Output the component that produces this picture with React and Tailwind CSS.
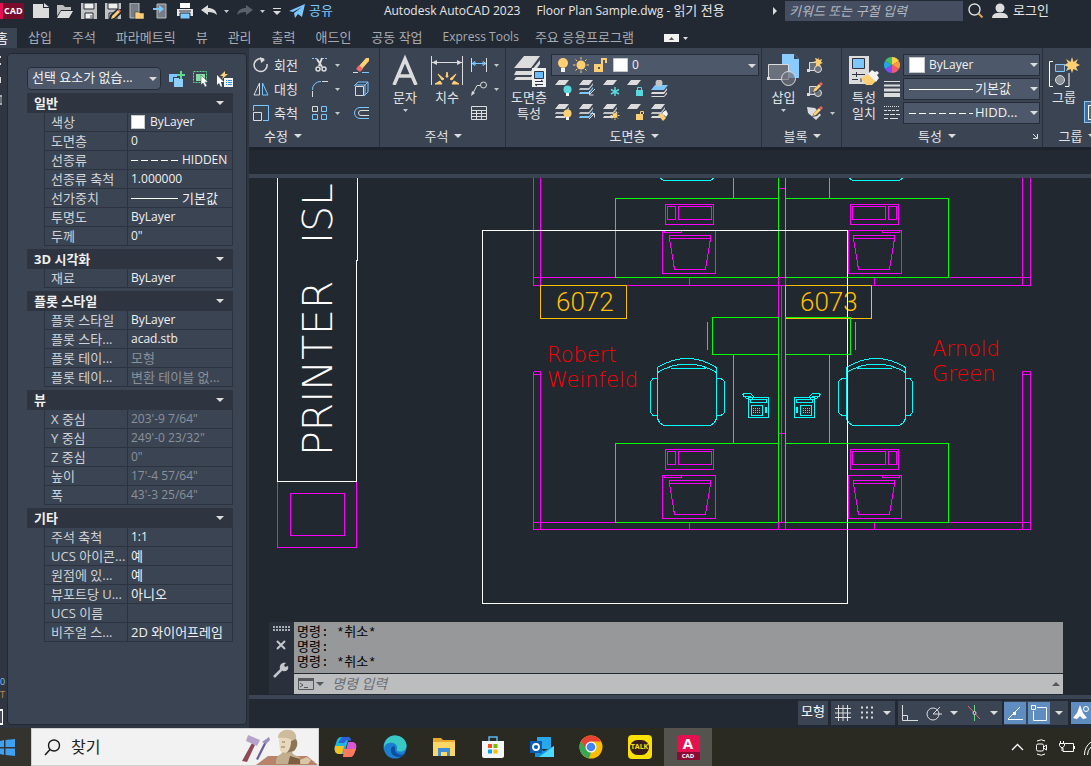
import React from 'react';
import clsx from 'clsx';

const RIBBON_TABS = [
  '삽입', '주석', '파라메트릭', '뷰', '관리', '출력', '애드인', '공동 작업', 'Express Tools', '주요 응용프로그램',
];

const SECTIONS = [
  {
    title: '일반',
    rows: [
      { label: '색상', value: 'ByLayer', mark: 'swatch' },
      { label: '도면층', value: '0' },
      { label: '선종류', value: 'HIDDEN', mark: 'dashed' },
      { label: '선종류 축척', value: '1.000000' },
      { label: '선가중치', value: '기본값', mark: 'solid' },
      { label: '투명도', value: 'ByLayer' },
      { label: '두께', value: '0"' },
    ],
  },
  { title: '3D 시각화', rows: [{ label: '재료', value: 'ByLayer' }] },
  {
    title: '플롯 스타일',
    rows: [
      { label: '플롯 스타일', value: 'ByLayer' },
      { label: '플롯 스타...', value: 'acad.stb' },
      { label: '플롯 테이...', value: '모형', muted: true },
      { label: '플롯 테이...', value: '변환 테이블 없...', muted: true },
    ],
  },
  {
    title: '뷰',
    rows: [
      { label: 'X 중심', value: '203\'-9 7/64"', muted: true },
      { label: 'Y 중심', value: '249\'-0 23/32"', muted: true },
      { label: 'Z 중심', value: '0"', muted: true },
      { label: '높이', value: '17\'-4 57/64"', muted: true },
      { label: '폭', value: '43\'-3 25/64"', muted: true },
    ],
  },
  {
    title: '기타',
    rows: [
      { label: '주석 축척', value: '1:1' },
      { label: 'UCS 아이콘...', value: '예' },
      { label: '원점에 있...', value: '예' },
      { label: '뷰포트당 U...', value: '아니오' },
      { label: 'UCS 이름', value: '' },
      { label: '비주얼 스...', value: '2D 와이어프레임' },
    ],
  },
];

/* ---------- small building blocks ---------- */

function Icon({ size = 16, className, children }) {
  return (
    <svg
      width={size}
      height={size}
      viewBox={`0 0 ${size} ${size}`}
      fill="none"
      stroke="#dcdcdc"
      className={clsx('shrink-0', className)}
      aria-hidden="true"
    >
      {children}
    </svg>
  );
}

function Caret({ small = false, className }) {
  return small ? (
    <svg width="5" height="3" viewBox="0 0 5 3" className={clsx('shrink-0', className)} aria-hidden="true">
      <path d="M0 0h5L2.5 3z" fill="#c4c7cb" />
    </svg>
  ) : (
    <svg width="8" height="4" viewBox="0 0 8 4" className={clsx('shrink-0', className)} aria-hidden="true">
      <path d="M0 0h8L4 4z" fill="#dcdcdc" />
    </svg>
  );
}

function ToolButton({ label, children, className }) {
  return (
    <button type="button" aria-label={label} className={clsx('flex items-center justify-center', className)}>
      {children}
    </button>
  );
}

/* ---------- quick access icons ---------- */

const NewIcon = () => (
  <Icon><path d="M0 1h10v4h6v10H0z" fill="#dcdcdc" stroke="none" /><path d="M11 0l5 4h-5z" fill="#dcdcdc" stroke="none" /></Icon>
);
const OpenIcon = () => (
  <Icon><path d="M0 2h6l2 2h6v3H4L0 13z" fill="#bdbdbd" stroke="none" /><path d="M4 8h12l-4 7H0z" fill="#dcdcdc" stroke="none" /></Icon>
);
const SaveIcon = ({ pencil: withPencil }) => (
  <Icon>
    <path d="M0 0h16v16H0z" fill="#c2c2c2" stroke="none" />
    <path d="M3 0h10v6H3zM4 10h8v6H4z" fill="#eeeeee" stroke="#222933" />
    <path d="M10 12v3" stroke="#555" />
    {withPencil && (
      <g stroke="none">
        <path d="M4 16l1-4 7-6h4v5l-6 5z" fill="#222933" />
        <path d="M7 13l6-6 2 2-6 6-3 1z" fill="#ffcf73" />
        <path d="M13 7l1-1 2 2-1 1z" fill="#ff6b6b" />
      </g>
    )}
  </Icon>
);
const MobileOpenIcon = () => (
  <Icon><path d="M1 0h9v15H1z" fill="#777d86" stroke="#bdbdbd" /><path d="M6 9h4l1 1h4v6H6z" fill="#ffcf73" stroke="#222933" strokeWidth="0.5" /></Icon>
);
const MobileSaveIcon = () => (
  <Icon><path d="M4 1h9v14H4z" fill="#777d86" stroke="#bdbdbd" /><path d="M0 5h6V2l5 4-5 4V7H0z" fill="#7cc7ff" stroke="none" /></Icon>
);
const PrintIcon = () => (
  <Icon>
    <path d="M3 0h10v5H3z" fill="#ffffff" stroke="none" />
    <path d="M0 6h16v7H0z" fill="#e8e8e8" stroke="none" />
    <path d="M2 8h12" stroke="#222933" />
    <path d="M3 10h10v6H3z" fill="#7cc7ff" stroke="#222933" />
  </Icon>
);
const UndoIcon = ({ flip }) => (
  <Icon className={clsx(flip && '-scale-x-100')}>
    <path d="M0 7l7-5v3c5 0 8 2 9 7-2-2-5-3-9-3v3z" fill={flip ? '#5a616b' : '#dcdcdc'} stroke="none" />
  </Icon>
);
const ShareIcon = () => (
  <Icon><path d="M0 8L16 1l-3 13-4-3-3 4-1-5 8-6-9 5z" fill="#7cc7ff" stroke="none" /></Icon>
);

function TitleBar() {
  return (
    <header className="flex h-7 shrink-0 items-start overflow-hidden whitespace-nowrap text-[13px] text-[#e6e6e6]">
      <div className="flex h-[22px] items-center">
        <button type="button" className="flex h-4 w-6 items-center bg-[#7a0c2e] text-[9px] font-bold text-white">
          <span className="mr-px h-4 w-[3px] bg-[#e51050]" />
          CAD
        </button>
        <div className="ml-[9px] flex items-center gap-2">
          <ToolButton label="새로 만들기"><NewIcon /></ToolButton>
          <ToolButton label="열기"><OpenIcon /></ToolButton>
          <ToolButton label="저장"><SaveIcon /></ToolButton>
          <ToolButton label="다른 이름으로 저장"><SaveIcon pencil /></ToolButton>
          <ToolButton label="웹 및 모바일에서 열기"><MobileOpenIcon /></ToolButton>
          <ToolButton label="웹 및 모바일에 저장"><MobileSaveIcon /></ToolButton>
          <ToolButton label="플롯"><PrintIcon /></ToolButton>
          <ToolButton label="명령 취소"><UndoIcon /></ToolButton>
        </div>
        <Caret small className="ml-[7px]" />
        <ToolButton label="명령 복구" className="ml-2"><UndoIcon flip /></ToolButton>
        <Caret small className="ml-[7px]" />
        <ToolButton label="사용자화" className="ml-2">
          <svg width="8" height="7" viewBox="0 0 8 7" aria-hidden="true"><path d="M0 0h8v1H0zM0 3h8L4 7z" fill="#dcdcdc" /></svg>
        </ToolButton>
        <button type="button" className="ml-2 flex items-center gap-1 text-[#7cc7ff]">
          <ShareIcon />
          공유
        </button>
      </div>
      <h1 className="ml-[51px] flex h-[22px] items-center gap-4 text-xs">
        <span>Autodesk AutoCAD 2023</span>
        <span>Floor Plan Sample.dwg - <span className="text-[13px]">읽기 전용</span></span>
      </h1>
      <div className="ml-auto flex h-[22px] items-center pr-[42px]">
        <svg width="4" height="8" viewBox="0 0 4 8" className="mr-2" aria-hidden="true"><path d="M0 0l4 4-4 4z" fill="#dcdcdc" /></svg>
        <input
          type="search"
          aria-label="검색"
          placeholder="키워드 또는 구절 입력"
          className="mb-px h-5 w-[178px] bg-[#454d60] px-1 text-[13px] italic text-white outline-none placeholder:text-[#b4b8c0]"
        />
        <ToolButton label="찾기" className="ml-[5px]">
          <Icon><circle cx="6.5" cy="6.5" r="5.5" strokeWidth="1.4" /><path d="M10.5 10.5l4 4" stroke="#e0a458" strokeWidth="2" /></Icon>
        </ToolButton>
        <button type="button" className="ml-2 flex items-center gap-[5px]">
          <Icon><circle cx="8" cy="5" r="4.5" fill="#dcdcdc" stroke="none" /><path d="M0 15c0-4 4-5 5-5h6c1 0 5 1 5 5z" fill="#dcdcdc" stroke="none" /></Icon>
          로그인
        </button>
      </div>
    </header>
  );
}

function TabBar() {
  return (
    <nav className="flex h-5 shrink-0 items-stretch overflow-hidden whitespace-nowrap text-[13px] text-[#a8acb2]">
      <button type="button" className="flex w-[17px] shrink-0 items-center justify-end bg-[#3b4453] pr-[9px] leading-[18px] text-white">홈</button>
      <div className="ml-[11px] flex items-start gap-5">
        {RIBBON_TABS.map((tab) => (
          <button
            key={tab}
            type="button"
            className={clsx('leading-[18px]', tab === 'Express Tools' && '-mr-1 text-xs leading-[18px]')}
          >
            {tab}
          </button>
        ))}
      </div>
      <ToolButton label="리본 최소화" className="ml-[30px]">
        <svg width="24" height="8" viewBox="0 0 24 8" aria-hidden="true">
          <path d="M0 0h15v8H0z" fill="#f2f2f2" />
          <path d="M5 6h5L7.500 3z" fill="#555" />
          <path d="M19 3h5l-2.500 3z" fill="#dcdcdc" />
        </svg>
      </ToolButton>
    </nav>
  );
}

/* ---------- properties palette ---------- */

function ValueMark({ mark }) {
  if (mark === 'swatch') return <span className="mr-[5px] size-[14px] border border-[#c8c8c8] bg-white" />;
  if (mark === 'dashed') {
    return (
      <svg width="47" height="1" className="mr-1 shrink-0" aria-hidden="true">
        <path d="M0 .5h47" stroke="#fff" strokeDasharray="7 3" />
      </svg>
    );
  }
  if (mark === 'solid') return <span className="mr-1 h-px w-[47px] bg-white" />;
  return null;
}

function PropertySection({ title, rows }) {
  return (
    <section className="mb-[3px]">
      <button type="button" className="flex h-5 w-full items-center justify-between bg-[#2e3440] pl-[7px] pr-[9px] text-[13px] font-bold leading-[18px] text-[#f0f0f0]">
        {title}
        <Caret />
      </button>
      <div className="pl-[17px]">
        <table className="w-full table-fixed border-separate border-spacing-0 text-[13px]">
          <tbody>
            {rows.map(({ label, value, mark, muted }, i) => (
              <tr key={i} className="h-[19px]">
                <th scope="row" className="h-[19px] w-[84px] overflow-hidden whitespace-nowrap border-x border-b border-[#2c323e] p-0 pl-[6px] text-left font-normal leading-[18px] text-[#d0d3d7]">
                  {label}
                </th>
                <td className={clsx('h-[19px] overflow-hidden border-b border-r border-[#2c323e] p-0 pl-[3px]', muted ? 'text-[#8b919a]' : 'text-[#f0f0f0]')}>
                  <div className={clsx('flex items-center whitespace-nowrap leading-[18px]', !/[가-힣]/.test(value) && 'text-xs leading-[18px]')}>
                    <ValueMark mark={mark} />
                    {value}
                  </div>
                </td>
              </tr>
            ))}
          </tbody>
        </table>
      </div>
    </section>
  );
}

function PropertiesPalette() {
  return (
    <aside className="flex w-[249px] shrink-0 bg-[#2f3541]">
      <div className="flex w-[7px] shrink-0 flex-col overflow-hidden text-[9px] leading-[13px] text-[#a8acb2]">
        <span className="mt-2 h-[9px] w-px border-y-2 border-[#dcdcdc]" />
        <span className="mt-3 h-[6px] w-px bg-[#dcdcdc]" />
        <span className="mt-3 h-[10px] w-[2px] border-y-2 border-[#a8acb2] bg-[#6d737c]" />
        <span className="mt-auto text-[#7cc7ff]">0</span>
        <span className="text-[#c98a4b]">T</span>
        <span className="mb-[3px] mt-2 h-4 w-[3px] border-y-2 border-r border-white bg-[#454d60]" />
      </div>
      <div className="mb-[3px] mr-[2px] mt-[5px] flex-1 rounded border border-[#232933] bg-[#3b4453] pl-[19px] pr-[13px] pt-[13px]">
        <div className="flex items-center">
          <div className="relative flex w-[134px]">
            <select aria-label="선택 요소" className="h-[23px] w-full appearance-none rounded-sm border border-[#272d38] bg-[#4d586b] pb-[2px] pl-1 text-[13px] text-[#f0f0f0]">
              <option>선택 요소가 없습...</option>
            </select>
            <Caret className="pointer-events-none absolute right-1 top-[10px]" />
          </div>
          <div className="ml-2 flex gap-2">
            <ToolButton label="PICKADD 전환">
              <Icon>
                <path d="M0 3h8v8H0z" fill="#7cc7ff" stroke="none" />
                <path d="M4 6h11v10H4z" fill="#3b4453" stroke="none" />
                <path d="M5 7h9v9H5z" fill="#8fd0ff" stroke="none" />
                <path d="M12 0v8M8 4h8" stroke="#3b4453" strokeWidth="4" />
                <path d="M12 0v8M8 4h8" stroke="#5fd98a" strokeWidth="2" />
              </Icon>
            </ToolButton>
            <ToolButton label="객체 선택">
              <Icon>
                <path d="M.5.5h13v11H.5z" stroke="#5fd98a" strokeDasharray="2 1" />
                <path d="M3 3h9v7H3z" fill="#86dba2" stroke="none" />
                <path d="M8 4v10l2-2 2 4 2-1-2-4h3z" fill="#ffffff" stroke="#3b4453" strokeWidth=".5" />
              </Icon>
            </ToolButton>
            <ToolButton label="신속 선택">
              <Icon>
                <path d="M8 0L3 5h3L5 8l6-5H8z" fill="#ffcf73" stroke="none" />
                <path d="M0 4v10l2-2 2 4 1-1-1-4h3z" fill="#ffffff" stroke="none" />
                <path d="M7 7h9v9H7z" fill="#f4f4f4" stroke="none" />
                <path d="M9 9.500h1M9 11.500h1M9 13.500h1M11 9.500h4M11 11.500h4M11 13.500h4" stroke="#2f8fe0" />
              </Icon>
            </ToolButton>
          </div>
        </div>
        <div className="pt-[3px]">
          {SECTIONS.map((section) => (
            <PropertySection key={section.title} {...section} />
          ))}
        </div>
      </div>
    </aside>
  );
}

/* ---------- ribbon ---------- */

function RibbonPanel({ title, launcher, className, children }) {
  return (
    <section className={clsx('flex shrink-0 flex-col border-r border-[#2a303b]', className)}>
      <div className="flex h-[77px] pt-[5px]">{children}</div>
      <button type="button" className="relative flex h-[22px] items-center justify-center gap-[6px] pl-[2px] text-[13px] leading-[18px] text-[#e2e4e7]">
        {title}
        <Caret />
        {launcher && (
          <svg width="6" height="6" viewBox="0 0 6 6" className="absolute right-1 top-2" aria-hidden="true">
            <path d="M1 1l4 4M5.500 1v4.500H1" stroke="#dcdcdc" fill="none" />
          </svg>
        )}
      </button>
    </section>
  );
}

function BigButton({ icon, lines, caret, className }) {
  return (
    <button type="button" className={clsx('flex flex-col items-center text-[13px] leading-4 text-[#e2e4e7]', className)}>
      <span className="mb-[3px] block h-[33px]">{icon}</span>
      {lines.map((line) => (
        <span key={line} className="whitespace-nowrap">{line}</span>
      ))}
      {caret && <Caret small className="mt-1" />}
    </button>
  );
}

const ModifyIcons = {
  rotate: <Icon><path d="M11 2.500A6.500 6.500 0 1 0 14 7" strokeWidth="1.500" /><path d="M7 0l5 3-4 3z" fill="#dcdcdc" stroke="none" /></Icon>,
  mirror: <Icon><path d="M6.500 2v12H1z" /><path d="M9.500 2v12H15z" stroke="#7cc7ff" /></Icon>,
  scale: <Icon><path d="M.5 6V.5h15v15H10" stroke="#7cc7ff" /><path d="M.5 7.500h8v8h-8z" /></Icon>,
  trim: <Icon><path d="M0 1.500h6M10 1.500h6" stroke="#7cc7ff" strokeDasharray="2 1" /><path d="M5 2l5 8M10 1L7 9" strokeWidth="2" /><circle cx="6" cy="12" r="2" strokeWidth="1.500" /><circle cx="12" cy="12" r="2" strokeWidth="1.500" /></Icon>,
  fillet: <Icon><path d="M.5 16v-6" /><path d="M.5 9A8 8 0 0 1 9 .5" stroke="#7cc7ff" /><path d="M10 .5h6" /></Icon>,
  array: <Icon><path d="M.5 1.500h5v5h-5z" /><path d="M9.500 1.500h5v5h-5zM.5 9.500h5v5h-5zM9.500 9.500h5v5h-5z" stroke="#7cc7ff" /></Icon>,
  erase: <Icon><path d="M6 9L13 1h3v3L9 12z" fill="#ffcf73" stroke="none" /><path d="M6 8l4 4-3 3-4-3z" fill="#f06a6a" stroke="none" /><path d="M0 15.500h5" /><path d="M9 15.500h7" stroke="#7cc7ff" /></Icon>,
  explode: <Icon><path d="M2.500 5.500h8v9h-8z" /><path d="M1 5l4-4h10v10l-4 4M11 5l4-4M12 14V4H2" stroke="#7cc7ff" /></Icon>,
  offset: <Icon><path d="M16 2.500H7a5 5 0 0 0 0 11h9" stroke="#7cc7ff" /><path d="M16 5.500H8a2.500 2.500 0 0 0 0 5h8" /></Icon>,
};

function ModifyPanel() {
  const rows = [
    { icon: 'rotate', label: '회전', second: 'trim', third: 'erase' },
    { icon: 'mirror', label: '대칭', second: 'fillet', third: 'explode' },
    { icon: 'scale', label: '축척', second: 'array', third: 'offset' },
  ];
  return (
    <RibbonPanel title="수정" className="w-[131px] [&>button]:pr-16">
      <div className="flex flex-col pl-1">
        {rows.map((row) => (
          <div key={row.icon} className="flex h-6 items-center">
            <button type="button" className="flex w-[59px] items-center gap-[5px] whitespace-nowrap text-[13px] leading-[18px] text-[#e2e4e7]">
              {ModifyIcons[row.icon]}
              {row.label}
            </button>
            <ToolButton label={row.second} className="gap-[7px]">
              {ModifyIcons[row.second]}
              <Caret small />
            </ToolButton>
            <ToolButton label={row.third} className="ml-[13px]">{ModifyIcons[row.third]}</ToolButton>
          </div>
        ))}
      </div>
    </RibbonPanel>
  );
}

function AnnotatePanel() {
  return (
    <RibbonPanel title="주석" className="w-[126px]">
      <BigButton
        lines={['문자']}
        caret
        className="ml-3"
        icon={(
          <svg width="26" height="32" viewBox="0 0 26 32" aria-hidden="true">
            <path d="M2 32L13 6l11 26M6 23h14" stroke="#dcdcdc" strokeWidth="3.500" fill="none" />
          </svg>
        )}
      />
      <BigButton
        lines={['치수']}
        className="ml-[13px]"
        icon={(
          <Icon size={32}>
            <path d="M.5 3v31M31.500 3v31M1 9.500h30" />
            <path d="M1 9.500l5-2.500v5zM31 9.500l-5-2.500v5z" fill="#dcdcdc" stroke="none" />
            <path d="M15 24l1-5 1 5zM11 27l-4-6 6 5zM21 27l4-6-6 5zM4 31l5-3 2 3zM28 31l-5-3-2 3z" fill="#ffcf73" stroke="#ffcf73" />
          </Icon>
        )}
      />
      <div className="ml-2 flex flex-col">
        <ToolButton label="선형" className="h-6 gap-[7px]">
          <Icon><path d="M.5 1v14M15.500 1v14" /><path d="M1 6.500h14M1 6.500l3-2v4zM15 6.500l-3-2v4z" stroke="#7cc7ff" /></Icon>
          <Caret small />
        </ToolButton>
        <ToolButton label="지시선" className="h-6 gap-[7px]">
          <Icon><circle cx="12.500" cy="4" r="3" /><path d="M9 4.500H6L2 12" /><path d="M0 15l1-5 3 2z" fill="#dcdcdc" stroke="none" /></Icon>
          <Caret small />
        </ToolButton>
        <ToolButton label="테이블" className="h-6 w-4">
          <Icon><path d="M.5 1.500h15v13H.5zM.5 5.500h15M.5 8.500h15M.5 11.500h15M5.500 5.500v9M10.500 5.500v9" /></Icon>
        </ToolButton>
      </div>
    </RibbonPanel>
  );
}

/** Stack of sheets used by the layer tools; `marker` is drawn over the lower right corner. */
function LayerIcon({ sheets = 3, accent = false, marker }) {
  return (
    <Icon size={17}>
      <g stroke="none">
        <path d="M4 0h10l-4 5H0z" fill="#dcdcdc" />
        {sheets > 1 && (
          <>
            <path d="M1 8h9l4-5v2L10 10H0z" fill="#bfc3c8" />
            <path d="M1 12h9l4-5v2L10 14H0z" fill={accent ? '#7cc7ff' : '#dcdcdc'} />
          </>
        )}
      </g>
      {marker}
    </Icon>
  );
}

const bulb = (color) => (
  <g stroke="none"><circle cx="12.500" cy="9.500" r="4" fill={color} /><path d="M11 13h3v3h-3z" fill="#f4f4f4" /></g>
);
const padlock = (color, open) => (
  <g><path d="M9 10h7v6H9z" fill={color} stroke="none" /><path d={open ? 'M13.500 10V7.500h3V10' : 'M10.500 10V7.500h4V10'} stroke={color} /></g>
);

const LAYER_TOOLS = [
  ['끄기', <LayerIcon sheets={1} marker={bulb('#5ad8e0')} />],
  ['분리', <LayerIcon accent marker={<path d="M16 9l-5 5M10.500 11v4h4" />} />],
  ['동결', <LayerIcon sheets={1} marker={<path d="M12 7v9M8 9.500l8 4.500M16 9.500L8 14" stroke="#5ad8e0" strokeWidth="1.500" />} />],
  ['잠금', <LayerIcon sheets={1} marker={padlock('#5ad8e0')} />],
  ['현재로 설정', (
    <Icon size={17}>
      <path d="M4 5h13l-4 5H0z" fill="#7cc7ff" stroke="none" />
      <path d="M1 12h12l3-4v2l-3 4H0zM1 16h12l3-4v2l-3 3H0z" fill="#dcdcdc" stroke="none" />
      <circle cx="8" cy="3" r="3.500" fill="#c4c4c4" stroke="none" />
    </Icon>
  )],
  ['모두 켜기', <LayerIcon marker={bulb('#ffcf73')} />],
  ['분리 해제', <LayerIcon accent marker={<path d="M10 15l5-5M11.500 9.500h4v4" />} />],
  ['모두 동결 해제', <LayerIcon marker={<g stroke="#ffcf73"><circle cx="12" cy="11.500" r="2.500" fill="#ffcf73" stroke="none" /><path d="M12 7v1.500M12 14.500V16M7.500 11.500H9M15 11.500h1.500M9 8.500l1 1M15 8.500l-1 1M9 14.500l1-1M15 14.500l-1-1" /></g>} />],
  ['잠금 해제', <LayerIcon sheets={1} marker={padlock('#ffcf73', true)} />],
  ['일치', <LayerIcon marker={<g stroke="none"><path d="M7 11l4-2 4 5-3 3z" fill="#ffcf73" /><path d="M11 9l4-3 2 4-2 3z" fill="#f4f4f4" /></g>} />],
];

function LayersPanel() {
  return (
    <RibbonPanel title="도면층" className="w-[256px]">
      <BigButton
        lines={['도면층', '특성']}
        className="ml-[5px]"
        icon={(
          <Icon size={34}>
            <g stroke="none" fill="#dcdcdc">
              <path d="M12 3h16l-9 12H2z" />
              <path d="M4 18h15l9-11v4l-8 11H2z" />
              <path d="M4 24h15l6-8v4l-5 7H2z" />
              <path d="M20 15h14v20H20z" fill="#f0f0f0" />
            </g>
            <path d="M22.500 18.500h9v7h-9z" fill="#6bbcff" stroke="#2e3440" />
            <path d="M23 28.500h8M29 27l2 1.500M31 31.500h-8M25 33l-2-1.500" stroke="#2e3440" />
          </Icon>
        )}
      />
      <div className="ml-1 flex flex-1 flex-col pr-[2px]">
        <div className="relative mt-px flex">
          <select aria-label="도면층" className="h-[22px] w-full appearance-none border border-[#272d38] bg-[#4d586b] pl-[80px] text-xs text-[#f0f0f0]">
            <option>0</option>
          </select>
          <svg width="80" height="18" viewBox="0 0 80 18" className="pointer-events-none absolute left-1 top-[2px]" aria-hidden="true">
            <circle cx="8" cy="7" r="5" fill="#ffcf73" />
            <path d="M6 12h4v4H6z" fill="#f4f4f4" />
            <circle cx="26" cy="9" r="4.500" fill="#ffcf73" />
            <path d="M26 1v2.500M26 14.500V17M18 9h2.500M31.500 9H34M20.500 3.500l1.500 1.500M31.500 3.500L30 5M20.500 14.500l1.500-1.500M31.500 14.500L30 13" stroke="#ffcf73" />
            <path d="M39 8h9v8h-9z" fill="#ffcf73" />
            <path d="M47 8V3h4v4" stroke="#ffcf73" strokeWidth="2" fill="none" />
            <path d="M43 11h2v2h-2z" fill="#4d586b" />
            <path d="M58.500 2.500h14v13h-14z" fill="#ffffff" stroke="#c8c8c8" />
          </svg>
          <Caret className="pointer-events-none absolute right-[3px] top-[10px]" />
        </div>
        <div className="ml-1 grid w-[120px] grid-cols-5">
          {LAYER_TOOLS.map(([label, icon]) => (
            <ToolButton key={label} label={label} className="h-6 !justify-start">{icon}</ToolButton>
          ))}
        </div>
      </div>
    </RibbonPanel>
  );
}

function BlockBase({ children, tag }) {
  return (
    <Icon>
      {tag ? (
        <path d="M0 2l8 1 6 7-5 5-8-7z" fill="#dcdcdc" stroke="none" />
      ) : (
        <>
          <path d="M2.500 5.500h9v8h-9z" fill="#6b717c" />
          <path d="M0 12h3v3H0z" fill="#dcdcdc" stroke="none" />
          <circle cx="11" cy="12" r="3.500" fill="#6b717c" />
        </>
      )}
      {children}
    </Icon>
  );
}

const pencil = (
  <g stroke="none">
    <path d="M5 12l2-4 7-7 3 3-7 7z" fill="#3b4453" />
    <path d="M6 11l1-3 5-5 2 2-5 5z" fill="#ffcf73" />
    <path d="M12 3l2-2 2 2-2 2z" fill="#ff5a5a" />
  </g>
);

function BlockPanel() {
  return (
    <RibbonPanel title="블록" className="w-[80px]">
      <BigButton
        lines={['삽입']}
        caret
        className="ml-[5px]"
        icon={(
          <Icon size={33}>
            <path d="M15 1h12l5 5v19H15z" fill="#8accff" stroke="none" />
            <path d="M27 1l5 5h-5z" fill="#3b4453" stroke="none" />
            <path d="M1.500 11.500h20v15h-20z" fill="#6b717c" />
            <path d="M0 24h3v3H0z" fill="#dcdcdc" stroke="none" />
            <circle cx="21.500" cy="25.500" r="7" fill="#6b717c" fillOpacity=".7" />
          </Icon>
        )}
      />
      <div className="ml-[7px] flex flex-col items-start">
        <ToolButton label="블록 작성" className="h-6">
          <BlockBase><path d="M11 0l1 3 3-1-1 3 2 1-3 1 1 3-3-2-2 2V6L6 5l3-1-1-3 3 1z" fill="#ffcf73" stroke="none" /></BlockBase>
        </ToolButton>
        <ToolButton label="블록 편집" className="h-6"><BlockBase>{pencil}</BlockBase></ToolButton>
        <ToolButton label="속성 편집" className="h-6 gap-[7px]"><BlockBase tag>{pencil}</BlockBase><Caret small /></ToolButton>
      </div>
    </RibbonPanel>
  );
}

function PropertyCombo({ label, value, lead, dashed }) {
  return (
    <div className="relative flex h-6 items-center">
      <select aria-label={label} className={clsx('h-[22px] w-full appearance-none border border-[#272d38] bg-[#4d586b] pb-px text-[#f0f0f0]', lead ? 'pl-[25px] text-xs' : 'pl-[71px] text-[13px]')}>
        <option>{value}</option>
      </select>
      {lead ? (
        <span className="pointer-events-none absolute left-[6px] size-4 border border-[#c8c8c8] bg-white" />
      ) : (
        <svg width="64" height="1" className="pointer-events-none absolute left-[6px]" aria-hidden="true">
          <path d="M0 .5h64" stroke="#fff" strokeDasharray={dashed ? '7 3' : undefined} />
        </svg>
      )}
      <Caret className="pointer-events-none absolute right-[2px]" />
    </div>
  );
}

function PropertiesPanel() {
  const wheel = ['#ffcf4a', '#ff9a3c', '#f25a6a', '#7c4dff', '#22a8e0', '#3fbf6b'];
  return (
    <RibbonPanel title="특성" launcher className="w-[201px] [&>button]:pr-3">
      <BigButton
        lines={['특성', '일치']}
        className="ml-[6px]"
        icon={(
          <Icon size={32}>
            <path d="M1 3h20v28H1z" fill="#dcdcdc" stroke="none" />
            <path d="M4.500 5.500h12v10h-12z" fill="#7cc7ff" stroke="#2e3440" />
            <path d="M4 21.500h13M8.500 19v5M4 26.500h6M13 25v4" stroke="#2e3440" />
            <path d="M13 25l8-4 8 6-6 6-5-1z" fill="#ffcf73" stroke="none" />
            <path d="M20 21l4-4 3 2 2-1 2 2-2 2 2 3-3 4z" fill="#f4f4f4" stroke="none" />
          </Icon>
        )}
      />
      <div className="ml-1 flex flex-col">
        <ToolButton label="객체 색상" className="h-6">
          <Icon>
            {wheel.map((color, i) => (
              <path key={color} d="M8 8V0a8 8 0 0 1 6.930 4z" fill={color} stroke="none" transform={`rotate(${i * 60} 8 8)`} />
            ))}
          </Icon>
        </ToolButton>
        <ToolButton label="선가중치" className="h-6">
          <Icon><path d="M0 .5h16" /><path d="M0 4.500h16" strokeWidth="2" /><path d="M0 9h16" strokeWidth="3" /><path d="M0 14h16" strokeWidth="4" /></Icon>
        </ToolButton>
        <ToolButton label="선종류" className="h-6">
          <Icon><path d="M0 1.500h16" strokeDasharray="1 1" /><path d="M0 5.500h16" strokeDasharray="3 1" /><path d="M0 9.500h16" strokeDasharray="5 1" /><path d="M0 13.500h16" strokeDasharray="4 2 8 2" /></Icon>
        </ToolButton>
      </div>
      <div className="ml-[3px] flex flex-1 flex-col pr-[2px]">
        <PropertyCombo label="객체 색상" value="ByLayer" lead />
        <PropertyCombo label="선가중치" value="기본값" />
        <PropertyCombo label="선종류" value="HIDD..." dashed />
      </div>
    </RibbonPanel>
  );
}

function GroupPanel() {
  return (
    <RibbonPanel title="그룹" className="w-[68px]">
      <BigButton
        lines={['그룹']}
        className="ml-1"
        icon={(
          <Icon size={34}>
            <path d="M6 8.500H2.500v25H6M18 33.500h4V20" stroke="#ffffff" />
            <path d="M8.500 11.500h9v7h-9z" stroke="#7cc7ff" fill="#4d586b" />
            <circle cx="13" cy="27" r="4.500" fill="#8b919a" />
            <path d="M25 4l1.500 5L31 6l-2 4 4 2-4 2 2 4-4.500-2L25 20l-1.500-4L19 18l2-4-4-2 4-2-2-4 4.500 3z" fill="#ffcf73" stroke="none" />
          </Icon>
        )}
      />
      <div className="ml-2 flex flex-col">
        <ToolButton label="그룹 해제" className="h-6"><Icon><path d="M0 1h6v5H0z" fill="#7cc7ff" stroke="none" /><circle cx="4" cy="12" r="4" /></Icon></ToolButton>
        <ToolButton label="그룹 편집" className="h-6"><Icon><path d="M4 .5H.5v14H4" stroke="#fff" /></Icon></ToolButton>
        <button type="button" aria-label="그룹 선택" className="-ml-[5px] h-[22px] w-6 border border-[#7cc7ff] bg-[#4d6a8c] pl-[3px]">
          <Icon><path d="M4 1.500H.5v14H4" stroke="#fff" /></Icon>
        </button>
      </div>
    </RibbonPanel>
  );
}

function Ribbon() {
  return (
    <div className="flex h-[99px] shrink-0 overflow-hidden bg-[#3b4453]">
      <ModifyPanel />
      <AnnotatePanel />
      <LayersPanel />
      <BlockPanel />
      <PropertiesPanel />
      <GroupPanel />
    </div>
  );
}

/* ---------- drawing ---------- */

/** Computer + monitor of one desk. */
function Workstation() {
  return (
    <g stroke="#ff00ff">
      <path d="M665.500 449.500h48v20h-48z" />
      <path d="M667.500 451.500h8v13h-8zM678.500 451.500h33v13h-33z" />
      <path d="M662.500 475.500h53v43h-53z" />
      <path d="M664.500 475.500v2h17v-2" />
      <path d="M669.500 480.500h41v3h-41zM669.500 483.500l5 31h31l5-31" />
    </g>
  );
}

function Chair() {
  return (
    <g stroke="#00ffff">
      <path d="M657.500 372v46.500l2 4 4 3h47l4-3 2-4V372" />
      <path d="M657.500 372.500v-5q14-9 29.500-9t29.500 9v5q-14-8.500-29.500-8.500t-29.500 8.500zM671 368.500h35" />
      <path d="M657 378.500h-4l-2.500 3v31l2.500 3h4M717 378.500h4l3.500 3v31l-3.500 3h-4" />
    </g>
  );
}

function Phone() {
  return (
    <g stroke="#00ffff">
      <path d="M748.500 397.500h20v20h-20zM751.500 405.500h11v10h-11z" />
      <path d="M765.500 407v6M766.500 407v6" />
      <path d="M750.500 399.500h16v3h-16zM742.500 394.500l2-1h6l3 3-2 3-5-1zM743 396h7l2 2" />
      <path d="M753 408.500h8M753 410.500h8M753 412.500h8" strokeDasharray="1 1" />
    </g>
  );
}

function Seating() {
  return (
    <g>
      <Chair />
      <g clipPath="url(#sheet)"><g transform="translate(0 -245)"><Chair /></g></g>
      <Phone />
    </g>
  );
}

function Computers() {
  return (
    <g>
      <g transform="translate(0 -245)"><Workstation /></g>
      <Workstation />
    </g>
  );
}

function FloorPlan() {
  return (
    <svg className="block size-full" fill="none" shapeRendering="crispEdges" role="img" aria-label="Floor Plan">
      <g transform="translate(-249 -178)">
        <defs>
          <clipPath id="sheet"><path d="M249 178h900v100H249z" /></clipPath>
        </defs>

        {/* printer island */}
        <path d="M277.500 178v303.500h79V260.500h1V178" stroke="#ffffff" />
        <path d="M277.500 482v65.500h79V482M290.500 493.500h54v42h-54z" stroke="#ff00ff" />
        <g fill="#ffffff" className="font-extralight [font-family:'DejaVu_Sans',sans-serif] text-[41px]">
          <text transform="translate(332 456) rotate(-90)">PRINTER</text>
          <text transform="translate(332 244) rotate(-90)">ISL</text>
        </g>

        {/* partitions */}
        <g stroke="#ff00ff">
          <path d="M533.500 178v107.500h497V178M540.500 178v107M1022.500 178v107M533 277.500h498" />
          <path d="M533.500 371.500h7v158M533.500 371.500v158h497v-158h-8v158M533 374.500h7M1023 374.500h7M533 522.500h498" />
          <path d="M689.500 278v7M874.500 278v7M689.500 523v6M874.500 523v6M778 188.500h8M778 433.500h8" />
          <path d="M778.500 277v40M785.500 277v8M781.500 286v236M778.500 522v7M785.500 522v7" />
        </g>

        {/* desks */}
        <g stroke="#00ff00">
          <path d="M778.500 178v99M785.500 178v99M778.500 317v205M785.500 317v205" />
          <path d="M778 198.500H615.500v79H778M785 198.500h163.500v79H785" />
          <path d="M778 443.500H615.500v79H778M785 443.500h163.500v79H785" />
          <path d="M733.500 178v20M829.500 178v20M733.500 355v88M829.500 355v88" />
          <path d="M707.500 322v28M855.500 322v28" />
        </g>

        <Seating />
        <Computers />
        <g transform="translate(1563 0) scale(-1 1)"><Seating /></g>
        <g transform="translate(1564 0) scale(-1 1)"><Computers /></g>

        {/* room tags */}
        <path d="M540.500 285.500h86v33h-86zM785.500 285.500h86v33h-86z" stroke="#ffbf00" />
        <path d="M778 317.500h-65.500v37H778M785 317.500h65.500v37H785M785.500 319v40" stroke="#00ff00" />
        <g fill="#ffbf00" className="font-light [font-family:Roboto,sans-serif] text-[26px]">
          <text x="556" y="311">6072</text>
          <text x="800" y="311">6073</text>
        </g>
        <g fill="#ff0000" className="font-extralight [font-family:'DejaVu_Sans',sans-serif] text-[21px]">
          <text x="547" y="362">Robert</text>
          <text x="547" y="387">Weinfeld</text>
          <text x="932" y="356">Arnold</text>
          <text x="932" y="381">Green</text>
        </g>

        {/* plot window */}
        <path d="M482.500 230.500h365v373h-365z" stroke="#ffffff" />
      </g>
    </svg>
  );
}

function CommandLine() {
  return (
    <div className="absolute bottom-px left-5 right-7 flex">
      <div className="flex w-[25px] shrink-0 flex-col items-center bg-[#2a303c] pr-px pt-1">
        <svg width="17" height="6" className="ml-px" aria-hidden="true">
          <path d="M0 1h17M0 4h17" stroke="#a8acb2" strokeWidth="2" strokeDasharray="2 1" />
        </svg>
        <ToolButton label="닫기" className="mt-2">
          <svg width="10" height="10" viewBox="0 0 10 10" aria-hidden="true"><path d="M1 1l8 8M9 1L1 9" stroke="#c4c7cb" strokeWidth="2" /></svg>
        </ToolButton>
        <ToolButton label="사용자화" className="mt-3">
          <svg width="16" height="16" viewBox="0 0 16 16" aria-hidden="true">
            <path d="M1 15l8-8" stroke="#c4c7cb" strokeWidth="2.500" />
            <path d="M13 1l-2 2 1 2 3-1c1 3-1 6-5 5L7 7c-1-4 2-7 6-6z" fill="#c4c7cb" />
          </svg>
        </ToolButton>
      </div>
      <div className="flex-1">
        <div className="h-[51px] whitespace-pre bg-[#969899] pl-[3px] pt-[3px] text-[13px] leading-[15px] text-black [font-family:'Liberation_Mono','Noto_Sans_CJK_KR',monospace]">
          <p>명령: *취소*</p>
          <p>명령:</p>
          <p>명령: *취소*</p>
        </div>
        <div className="mt-px flex h-5 items-center bg-[#bbbdbf] pl-1 pr-[3px]">
          <svg width="26" height="12" viewBox="0 0 26 12" aria-hidden="true">
            <path d="M.5 1h15v10.500H.5z" fill="none" stroke="#55585c" />
            <path d="M0 0h16v3H0z" fill="#55585c" />
            <path d="M2 5l3 2-3 2M6 9.500h4" fill="none" stroke="#55585c" />
            <path d="M18 4h8l-4 4z" fill="#55585c" />
          </svg>
          <input
            type="text"
            aria-label="명령"
            placeholder="명령 입력"
            className="ml-2 h-full flex-1 bg-transparent pb-[2px] text-[14px] italic text-black outline-none placeholder:text-[#6b6e72]"
          />
          <svg width="8" height="4" aria-hidden="true"><path d="M0 4h8L4 0z" fill="#55585c" /></svg>
        </div>
      </div>
    </div>
  );
}

function StatusBar() {
  return (
    <footer className="flex h-[29px] shrink-0 items-start justify-end gap-[3px] overflow-hidden bg-[#222933] pt-[2px]">
      <button type="button" className="h-6 w-[30px] whitespace-nowrap bg-[#3b4453] pb-[2px] text-[13px] text-white">모형</button>
      <div className="flex h-6 w-16 items-center bg-[#3b4453] pl-1">
        <ToolButton label="그리드"><Icon><path d="M3.500 0v16M8 0v16M12.500 0v16M0 3.500h16M0 8h16M0 12.500h16" /></Icon></ToolButton>
        <ToolButton label="스냅" className="ml-[9px]"><Icon><path d="M1 2.500h14M1 7.500h14M1 12.500h14" strokeWidth="2" strokeDasharray="2 3" /></Icon></ToolButton>
        <Caret className="ml-[7px]" />
      </div>
      <div className="flex h-6 w-[104px] items-center bg-[#3b4453] pl-1">
        <ToolButton label="직교"><Icon><path d="M.5 0v15.500H16M.5 10.500h5v5" /></Icon></ToolButton>
        <ToolButton label="극좌표" className="ml-2"><Icon><circle cx="7" cy="9" r="6" /><path d="M7 9l7-7M7 9h9" /></Icon></ToolButton>
        <Caret className="ml-2" />
        <ToolButton label="등각투영" className="ml-2"><Icon><path d="M2 1l12 13" stroke="#e06a6a" /><path d="M8.500 0v16" stroke="#5fd98a" /><circle cx="8.500" cy="8" r="1.500" fill="#3b4453" /></Icon></ToolButton>
        <Caret className="ml-2" />
      </div>
      <div className="-ml-px flex h-6 items-center bg-[#3b4453]">
        <ToolButton label="객체 스냅 추적" className="h-[22px] w-[22px] bg-[#5f8dc0]"><Icon><path d="M1 14.500h15M1 14L13 2" stroke="#fff" /><path d="M6 7h3v3H6z" fill="#fff" stroke="none" /></Icon></ToolButton>
        <ToolButton label="객체 스냅" className="ml-[2px] h-[22px] w-[22px] bg-[#5f8dc0]"><Icon><path d="M6 2.500h9.500v13H2.500V6" stroke="#fff" /><path d="M.5.5h4v4h-4z" stroke="#fff" /></Icon></ToolButton>
        <Caret className="mx-[5px]" />
      </div>
      <ToolButton label="주석 객체" className="mt-px h-[22px] w-5 shrink-0 bg-[#5f8dc0]">
        <Icon><path d="M7 0l3 8 4 5-4 1-3-3-3 3-4-1 4-5z" fill="#fff" stroke="none" /><circle cx="13" cy="4" r="2.500" stroke="#fff" /></Icon>
      </ToolButton>
    </footer>
  );
}

/* ---------- desktop taskbar ---------- */

const APPS = [
  ['Copilot', (
    <g>
      <path d="M8 2h7l-5 17H5C1 19 0 15 1 11l2-6c1-2 2-3 5-3z" fill="#20b8d8" />
      <path d="M1 11c-1 4 0 8 4 8h3l2-8z" fill="#f3c11f" />
      <path d="M8 2h6c2 0 3 1 3 4l-4-1-3 3H4z" fill="#2a62dd" />
      <path d="M14 7h4c4 0 5 3 4 7l-2 5c-1 2-2 3-4 3H9l2-3z" fill="#d957d0" />
      <path d="M10 14h12l-2 5c-1 2-2 3-4 3H9z" fill="#ff7a5a" />
    </g>
  )],
  ['Edge', (
    <g>
      <circle cx="12" cy="12" r="11.500" fill="#1b7fd1" />
      <path d="M1 10C3 2 9 0 13 .5c7 .5 11 6 10.500 11-.5 4-4 5.500-7.500 5-3-.5-2-2-2-4C14 9 10 7 6 8c-3 .5-5 3-5 6z" fill="#38c9c4" />
      <path d="M9 12c-3 4 0 10 7 10 3 0 5-2 6-3-6 2-11-1-10-6 0-2-2-2-3-1z" fill="#0d4f9e" />
    </g>
  )],
  ['탐색기', (
    <g>
      <path d="M1 3h8l2 2h12v4H1z" fill="#e8a92f" />
      <path d="M1 7h22v14H1z" fill="#ffd766" />
      <path d="M6 13h12v8h-3v-4H9v4H6z" fill="#3f8fd8" />
    </g>
  )],
  ['Store', (
    <g>
      <path d="M8 6V2h8v4" stroke="#58b7f0" strokeWidth="1.500" fill="none" />
      <path d="M1 6h22v15c0 1-1 2-2 2H3c-1 0-2-1-2-2z" fill="#f4f6f8" />
      <path d="M7 9h4v4H7z" fill="#f25022" /><path d="M12.500 9h4v4h-4z" fill="#7fba00" />
      <path d="M7 14.500h4v4H7z" fill="#00a4ef" /><path d="M12.500 14.500h4v4h-4z" fill="#ffb900" />
    </g>
  )],
  ['Outlook', (
    <g>
      <path d="M7 2h14v12H7z" fill="#28a8ea" />
      <path d="M5 11l9 5 10-5v11H5z" fill="#1490df" />
      <path d="M24 11v11H9z" fill="#50d9ff" />
      <path d="M0 6h12v12H0z" fill="#0a5db0" />
      <circle cx="6" cy="12" r="3" stroke="#fff" strokeWidth="1.800" fill="none" />
    </g>
  )],
  ['Chrome', (
    <g>
      <circle cx="12" cy="12" r="11.500" fill="#fbbc05" />
      <path d="M12 .5A11.500 11.500 0 0 1 22 6.500H12L7 15 2 6.200A11.500 11.500 0 0 1 12 .5z" fill="#ea4335" />
      <path d="M2 6.200L7.500 15 12 17.500l-2 5.800A11.500 11.500 0 0 1 2 6.200z" fill="#34a853" />
      <circle cx="12" cy="12" r="5.500" fill="#fff" />
      <circle cx="12" cy="12" r="4.300" fill="#4285f4" />
    </g>
  )],
];

function Taskbar() {
  return (
    <footer className="flex h-[38px] shrink-0 items-stretch overflow-hidden bg-[#2b2a22]">
      <ToolButton label="시작" className="w-[31px] !justify-start bg-[#34332e]">
        <svg width="15" height="17" viewBox="0 0 15 17" aria-hidden="true">
          <path d="M0 2l4-1v7H0zM5.500 1L15 0v8H5.500zM0 9.500h4V16l-4-1zM5.500 9.500H15V17l-9.500-1z" fill="#3f9ff0" />
        </svg>
      </ToolButton>
      <label className="flex w-[288px] items-center border border-[#d0d0d0] bg-[#f2f2f2] pl-3">
        <svg width="17" height="17" viewBox="0 0 17 17" aria-hidden="true">
          <circle cx="10" cy="6.500" r="5.500" fill="none" stroke="#1a1a1a" strokeWidth="1.400" />
          <path d="M6 10.500L1 16" stroke="#1a1a1a" strokeWidth="1.500" />
        </svg>
        <input type="search" aria-label="찾기" placeholder="찾기" className="ml-[10px] min-w-0 flex-1 bg-transparent text-base outline-none placeholder:text-[#222]" />
        <svg width="78" height="36" viewBox="0 0 78 36" aria-hidden="true">
          <path d="M2 32L12 14l3 2L7 33z" fill="#8d4a55" />
          <path d="M8 6l12 5-3 6-11-5z" fill="#b7a3c9" />
          <path d="M16 30l9-18 2 1-9 18z" fill="#6c5d96" />
          <path d="M22 13l7-5 1 3-4 4z" fill="#9a8fc0" />
          <path d="M16 36l12-9h39l11 9z" fill="#b9836a" />
          <path d="M36 35c0-6 1-8 5-10l3-4h8c0 3 1 5 5 6 4 1 4 4 4 8z" fill="#c2ae8e" />
          <path d="M39 12c0-7 5-9 10-9 6 0 8 5 7 10-1 4-1 6-3 9l-8 2-5-2z" fill="#e8d9bd" />
          <path d="M38 9c0-6 6-9 11-8 6 0 9 6 6 12-5-4-10-5-17-4z" fill="#cdbb9c" />
          <path d="M51 12c0 6-2 10-5 12l8-2c4-4 4-9 2-12z" fill="#8b7658" />
          <path d="M42 13h3M41 18h4" stroke="#8b7658" />
          <path d="M48 35l2-8 10 3v5z" fill="#7a5f41" />
          <path d="M60 31l7-3 4 3-3 4h-7z" fill="#d9c8a8" />
        </svg>
      </label>
      <div className="ml-[2px] flex">
        {APPS.map(([name, art]) => (
          <ToolButton key={name} label={name} className="w-[49px]">
            <svg width="24" height="24" viewBox="0 0 24 24" aria-hidden="true">{art}</svg>
          </ToolButton>
        ))}
        <ToolButton label="KakaoTalk" className="w-[49px]">
          <span className="flex size-6 items-center justify-center rounded bg-[#fae100]">
            <span className="flex h-[15px] w-[19px] items-center justify-center rounded-[8px] bg-[#371d1e] text-[7px] font-bold text-[#fae100]">TALK</span>
          </span>
        </ToolButton>
        <button type="button" aria-label="AutoCAD" className="flex w-12 items-center justify-center bg-[#54534d]">
          <span className="flex h-[25px] w-[23px] flex-col items-center rounded-sm bg-[#e51050] text-white">
            <span className="text-[15px] font-bold leading-[17px]">A</span>
            <span className="w-full bg-[#8a0c34] text-center text-[6px] font-bold leading-[8px]">CAD</span>
          </span>
        </button>
      </div>
      <div className="ml-auto flex items-center gap-[9px]">
        <ToolButton label="숨겨진 아이콘 표시"><svg width="13" height="8" aria-hidden="true"><path d="M1 7l5.500-5.500L12 7" stroke="#fff" strokeWidth="1.300" fill="none" /></svg></ToolButton>
        <ToolButton label="카메라">
          <Icon size={17}><g stroke="#fff"><rect x="3.500" y="5" width="7" height="7" rx="1.500" /><path d="M10.500 8l3-2v5l-3-2M4 2q4.500-2.500 8 0M4 15q4.500 2.500 8 0" /></g></Icon>
        </ToolButton>
        <ToolButton label="배터리">
          <Icon size={16}><g stroke="#fff"><path d="M6 4.500h8.500v8H4V9" /><path d="M15.500 7v3" /><path d="M1.500 2v2M4.500 2v2M.5 4.500h5v2L4 8.500H2L.5 6.500zM3 8v4" /></g></Icon>
        </ToolButton>
        <svg width="7" height="17" viewBox="0 0 7 17" aria-label="네트워크" className="shrink-0">
          <path d="M.5 16A16 16 0 0 1 7 3M3.500 16A11 11 0 0 1 7 8" stroke="#fff" fill="none" />
        </svg>
      </div>
    </footer>
  );
}

export default function App() {
  return (
    <div className="flex h-screen w-full flex-col overflow-hidden bg-[#222933] [font-family:'Open_Sans','Noto_Sans_CJK_KR',sans-serif]">
      <TitleBar />
      <TabBar />
      <div className="flex min-h-0 flex-1">
        <PropertiesPalette />
        <main className="flex min-w-0 flex-1 flex-col">
          <Ribbon />
          <div className="h-[27px] shrink-0 border-t-[3px] border-[#1d232c]" />
          <div className="relative min-h-0 flex-1 overflow-hidden border-y-4 border-[#3b4453] bg-[#212830]">
            <FloorPlan />
            <CommandLine />
          </div>
          <StatusBar />
        </main>
      </div>
      <Taskbar />
    </div>
  );
}
